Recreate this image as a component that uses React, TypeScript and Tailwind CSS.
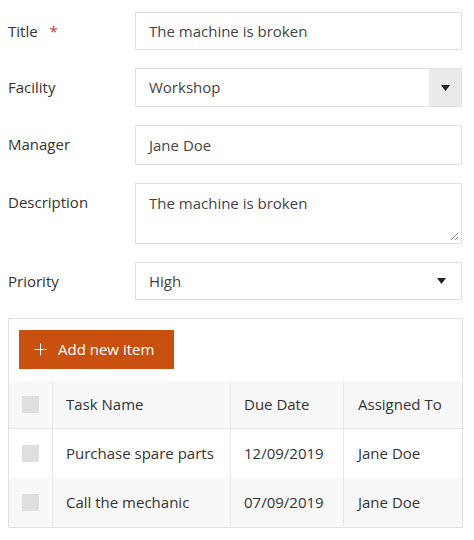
import { Plus } from "lucide-react";

const tasks = [
  { id: "1", name: "Purchase spare parts", due: "12/09/2019", assigned: "Jane Doe" },
  { id: "2", name: "Call the mechanic", due: "07/09/2019", assigned: "Jane Doe" },
];

const Caret = () => (
  <svg width="9" height="6" viewBox="0 0 9 6" className="text-[#222]">
    <path d="M0 0h9L4.5 6z" fill="currentColor" />
  </svg>
);

const Field = ({ label, required, children }: { label: string; required?: boolean; children: React.ReactNode }) => (
  <div className="flex items-start">
    <div className="w-[127px] pt-[7px] text-[#333] leading-6">
      {label}
      {required && <span className="ml-[12px] text-[#c4314b]">*</span>}
    </div>
    <div className="w-[327px]">{children}</div>
  </div>
);

const App = () => {
  return (
    <div className="w-[474px] h-[540px] bg-white pl-2 pt-3 text-[15px]" style={{ fontFamily: '"Open Sans", "Noto Sans", sans-serif' }}>
      <div className="space-y-[18px]">
        <Field label="Title" required>
          <div className="h-[38px] border border-[#e1e1e1] px-[13px] flex items-center text-[#444]">The machine is broken</div>
        </Field>
        <Field label="Facility">
          <div className="h-[39px] border border-[#e1e1e1] flex items-stretch text-[#444]">
            <div className="flex-1 px-[13px] flex items-center">Workshop</div>
            <div className="w-[32px] bg-[#e9eaec] flex items-center justify-center">
              <Caret />
            </div>
          </div>
        </Field>
        <Field label="Manager">
          <div className="h-[40px] border border-[#e1e1e1] px-[13px] flex items-center text-[#444]">Jane Doe</div>
        </Field>
        <Field label="Description">
          <div className="relative h-[61px] border border-[#e1e1e1] px-[13px] pt-[7px] leading-6 text-[#444]">
            The machine is broken
            <svg width="9" height="9" viewBox="0 0 9 9" className="absolute right-[2px] bottom-[2px]">
              <path d="M1 8L8 1M5 8L8 5" stroke="#888" strokeWidth="1" />
            </svg>
          </div>
        </Field>
        <Field label="Priority">
          <div className="h-[38px] border border-[#e1e1e1] px-[13px] flex items-center justify-between text-[#444]">
            <span>High</span>
            <span className="mr-[2px]">
              <Caret />
            </span>
          </div>
        </Field>
      </div>

      <div className="mt-[18px] w-[455px] border border-[#e1e1e1] pt-[11px]">
        <button className="ml-[10px] h-[39px] w-[155px] bg-[#ca5010] text-white flex items-center pl-[12px] gap-[8px]">
          <Plus className="h-[19px] w-[19px]" strokeWidth={1.25} />
          <span>Add new item</span>
        </button>
        <div className="mt-[12px] grid grid-cols-[44px_178px_113px_1fr] text-[#333]">
          <div className="h-[48px] bg-[#f8f8f8] border-r border-b border-[#e8e8e8] flex items-center justify-center">
            <div className="w-[17px] h-[17px] bg-[#dde0e3]" />
          </div>
          <div className="h-[48px] bg-[#f8f8f8] border-r border-b border-[#e8e8e8] flex items-center pl-[13px]">Task Name</div>
          <div className="h-[48px] bg-[#f8f8f8] border-r border-b border-[#e8e8e8] flex items-center pl-[13px]">Due Date</div>
          <div className="h-[48px] bg-[#f8f8f8] border-b border-[#e8e8e8] flex items-center pl-[14px]">Assigned To</div>
          {tasks.map((t, i) => {
            const bg = i % 2 === 1 ? "bg-[#f8f8f8]" : "bg-white";
            return [
              <div key={t.id + "c"} className={`h-[49px] ${bg} border-r border-[#e8e8e8] flex items-center justify-center`}>
                <div className="w-[17px] h-[17px] bg-[#dde0e3]" />
              </div>,
              <div key={t.id + "n"} className={`h-[49px] ${bg} border-r border-[#e8e8e8] flex items-center pl-[13px]`}>{t.name}</div>,
              <div key={t.id + "d"} className={`h-[49px] ${bg} border-r border-[#e8e8e8] flex items-center pl-[13px]`}>{t.due}</div>,
              <div key={t.id + "a"} className={`h-[49px] ${bg} flex items-center pl-[14px]`}>{t.assigned}</div>,
            ];
          })}
        </div>
      </div>
    </div>
  );
};

export default App;
